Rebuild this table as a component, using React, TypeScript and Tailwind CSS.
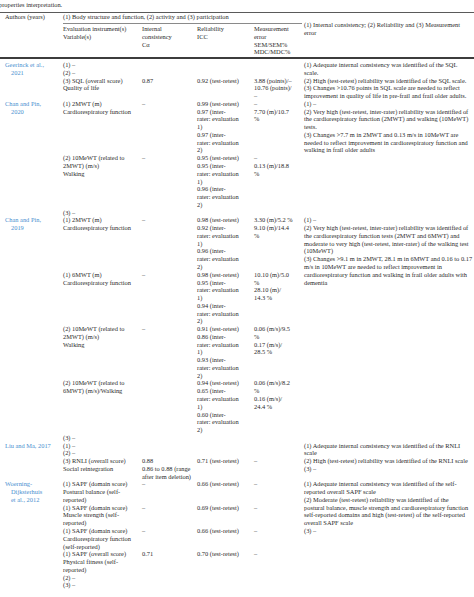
import React from "react";

type Row = { c2: string[]; c3?: string[]; c4?: string[]; c5?: string[] };
type Block = { author: string[]; rows: Row[]; right: string[] };

const cols = "grid grid-cols-[63px_79px_55px_57px_50px_1fr]";
const sub = "grid grid-cols-[79px_55px_57px_50px]";

const inter = (a: string, b: string) => [a, "0.9x (inter-".replace("0.9x", b), "rater: evaluation", "1)"];

const blocks: Block[] = [
  {
    author: ["Geerinck et al.,", "2021"],
    rows: [
      { c2: ["(1) –"] },
      { c2: ["(2) –"] },
      {
        c2: ["(3) SQL (overall score)", "Quality of life"],
        c3: ["0.87"],
        c4: ["0.92 (test-retest)"],
        c5: ["3.88 (points)/–", "10.76 (points)/", "–"],
      },
    ],
    right: [
      "(1) Adequate internal consistency was identified of the SQL",
      "scale.",
      "(2) High (test-retest) reliability was identified of the SQL scale.",
      "(3) Changes >10.76 points in SQL scale are needed to reflect",
      "improvement in quality of life in pre-frail and frail older adults.",
    ],
  },
  {
    author: ["Chan and Pin,", "2020"],
    rows: [
      {
        c2: ["(1) 2MWT (m)", "Cardiorespiratory function"],
        c3: ["–"],
        c4: [...inter("0.99 (test-retest)", "0.97"), "0.97 (inter-", "rater: evaluation", "2)"],
        c5: ["–", "7.70 (m)/10.7", "%"],
      },
      {
        c2: ["(2) 10MeWT (related to", "2MWT) (m/s)", "Walking"],
        c3: ["–"],
        c4: [...inter("0.95 (test-retest)", "0.95"), "0.96 (inter-", "rater: evaluation", "2)"],
        c5: ["–", "0.13 (m)/18.8", "%"],
      },
      { c2: ["(3) –"] },
    ],
    right: [
      "(1) –",
      "(2) Very high (test-retest, inter-rater) reliability was identified of",
      "the cardiorespiratory function (2MWT) and walking (10MeWT)",
      "tests.",
      "(3) Changes >7.7 m in 2MWT and 0.13 m/s in 10MeWT are",
      "needed to reflect improvement in cardiorespiratory function and",
      "walking in frail older adults",
    ],
  },
  {
    author: ["Chan and Pin,", "2019"],
    rows: [
      {
        c2: ["(1) 2MWT (m)", "Cardiorespiratory function"],
        c3: ["–"],
        c4: [...inter("0.98 (test-retest)", "0.92"), "0.96 (inter-", "rater: evaluation", "2)"],
        c5: ["3.30 (m)/5.2 %", "9.10 (m)/14.4", "%"],
      },
      {
        c2: ["(1) 6MWT (m)", "Cardiorespiratory function"],
        c3: ["–"],
        c4: [...inter("0.98 (test-retest)", "0.95"), "0.94 (inter-", "rater: evaluation", "2)"],
        c5: ["10.10 (m)/5.0", "%", "28.10 (m)/", "14.3 %"],
      },
      {
        c2: ["(2) 10MeWT (related to", "2MWT) (m/s)", "Walking"],
        c3: ["–"],
        c4: [...inter("0.91 (test-retest)", "0.86"), "0.93 (inter-", "rater: evaluation", "2)"],
        c5: ["0.06 (m/s)/9.5", "%", "0.17 (m/s)/", "28.5 %"],
      },
      {
        c2: ["(2) 10MeWT (related to", "6MWT) (m/s)/Walking"],
        c4: [...inter("0.94 (test-retest)", "0.65"), "0.60 (inter-", "rater: evaluation", "2)"],
        c5: ["0.06 (m/s)/8.2", "%", "0.16 (m/s)/", "24.4 %"],
      },
      { c2: ["(3) –"] },
    ],
    right: [
      "(1) –",
      "(2) Very high (test-retest, inter-rater) reliability was identified of",
      "the cardiorespiratory function tests (2MWT and 6MWT) and",
      "moderate to very high (test-retest, inter-rater) of the walking test",
      "(10MeWT)",
      "(3) Changes >9.1 m in 2MWT, 28.1 m in 6MWT and 0.16 to 0.17",
      "m/s in 10MeWT are needed to reflect improvement in",
      "cardiorespiratory function and walking in frail older adults with",
      "dementia",
    ],
  },
  {
    author: ["Liu and Ma, 2017"],
    rows: [
      { c2: ["(1) –"] },
      { c2: ["(2) –"] },
      {
        c2: ["(3) RNLI (overall score)", "Social reintegration"],
        c3: ["0.88", "0.86 to 0.88 (range", "after item deletion)"],
        c4: ["0.71 (test-retest)"],
        c5: ["–"],
      },
    ],
    right: [
      "(1) Adequate internal consistency was identified of the RNLI",
      "scale",
      "(2) High (test-retest) reliability was identified of the RNLI scale",
      "(3) –",
    ],
  },
  {
    author: ["Woerning-", "Dijksterhuis", "et al., 2012"],
    rows: [
      { c2: ["(1) SAPF (domain score)", "Postural balance (self-", "reported)"], c3: ["–"], c4: ["0.66 (test-retest)"], c5: ["–"] },
      { c2: ["(1) SAPF (domain score)", "Muscle strength (self-", "reported)"], c3: ["–"], c4: ["0.69 (test-retest)"], c5: ["–"] },
      { c2: ["(1) SAPF (domain score)", "Cardiorespiratory function", "(self-reported)"], c3: ["–"], c4: ["0.66 (test-retest)"], c5: ["–"] },
      { c2: ["(1) SAPF (overall score)", "Physical fitness (self-", "reported)"], c3: ["0.71"], c4: ["0.70 (test-retest)"], c5: ["–"] },
      { c2: ["(2) –"] },
      { c2: ["(3) –"] },
    ],
    right: [
      "(1) Adequate internal consistency was identified of the self-",
      "reported overall SAPF scale",
      "(2) Moderate (test-retest) reliability was identified of the",
      "postural balance, muscle strength and cardiorespiratory function",
      "self-reported domains and high (test-retest) of the self-reported",
      "overall SAPF scale",
      "(3) –",
    ],
  },
];

function Lines({ lines, className = "" }: { lines?: string[]; className?: string }) {
  if (!lines) return <div />;
  return (
    <div className={className}>
      {lines.map((l, i) => (
        <div key={i} className="whitespace-nowrap">
          {l}
        </div>
      ))}
    </div>
  );
}

export default function App() {
  return (
    <div
      className="w-[474px] h-[597px] overflow-hidden bg-white text-[#2a2a2a] text-[6.4px] leading-[7.76px]"
      style={{ fontFamily: '"Liberation Serif", "DejaVu Serif", serif' }}
    >
      <div className="h-[13px] pt-[1px] -ml-[1px] border-b border-[#5a5a5a]">properties interpretation.</div>

      {/* header */}
      <div className={`${cols} grid-rows-[11px_auto] border-b-2 border-[#3c3c3c]`}>
        <div className="row-span-2 pl-[5px]">Authors (years)</div>
        <div className="col-span-4 border-b border-[#8a8a8a] mr-[2px] whitespace-nowrap">
          (1) Body structure and function, (2) activity and (3) participation
        </div>
        <div className="row-span-2 pt-[8px]">
          <Lines lines={["(1) Internal consistency; (2) Reliability and (3) Measurement", "error"]} />
        </div>
        <Lines className="pt-[1px] pb-[1px]" lines={["Evaluation instrument(s)", "Variable(s)"]} />
        <Lines className="pt-[1px]" lines={["Internal", "consistency", "Cα"]} />
        <Lines className="pt-[1px]" lines={["Reliability", "ICC"]} />
        <Lines className="pt-[1px] pb-[1px]" lines={["Measurement", "error", "SEM/SEM%", "MDC/MDC%"]} />
      </div>

      {/* body */}
      <div className="pt-[2px]">
        {blocks.map((b, i) => (
          <div key={i} className={cols}>
            <div className="pl-[5px] text-[#4a8fcf]">
              {b.author.map((a, j) => (
                <div key={j} className={j > 0 ? "pl-[6px] whitespace-nowrap" : "whitespace-nowrap"}>
                  {a}
                </div>
              ))}
            </div>
            <div className="col-span-4">
              {b.rows.map((r, k) => (
                <div key={k} className={sub}>
                  <Lines lines={r.c2} />
                  <Lines lines={r.c3} />
                  <Lines lines={r.c4} />
                  <Lines lines={r.c5} />
                </div>
              ))}
            </div>
            <Lines lines={b.right} />
          </div>
        ))}
      </div>
    </div>
  );
}
